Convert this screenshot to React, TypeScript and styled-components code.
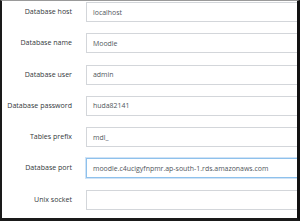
import React from 'react'
import styled, { createGlobalStyle } from 'styled-components'

const Global = createGlobalStyle`
  html, body {
    margin: 0;
    padding: 0;
    background: #ffffff;
  }
  * {
    box-sizing: border-box;
  }
`

const fields = [
    { label: 'Database host', value: 'localhost' },
    { label: 'Database name', value: 'Moodle' },
    { label: 'Database user', value: 'admin' },
    { label: 'Database password', value: 'huda82141' },
    { label: 'Tables prefix', value: 'mdl_' },
    { label: 'Database port', value: 'moodle.c4ucigyfnpmr.ap-south-1.rds.amazonaws.com', focused: true },
    { label: 'Unix socket', value: '' },
]

export default function App() {
    return (
        <>
            <Global />
            <Frame>
                <FormGrid>
                    {fields.map((f) => (
                        <React.Fragment key={f.label}>
                            <Label>{f.label}</Label>
                            <Input $focused={!!f.focused}>{f.value}</Input>
                        </React.Fragment>
                    ))}
                </FormGrid>
            </Frame>
        </>
    )
}

const Frame = styled.div`
width: 300px;
height: 221px;
background: #fff;
border-top: 1px solid #9a9a9a;
border-left: 2px solid #1a1a1a;
border-right: 3px solid #111;
border-bottom: 3px solid #1a1a1a;
overflow: hidden;
padding-top: 1px;
font-family: "Open Sans", "Noto Sans", sans-serif;
`

const FormGrid = styled.div`
display: grid;
grid-template-columns: 70px 260px;
grid-auto-rows: 20px;
column-gap: 14px;
row-gap: 11.3px;
`

const Label = styled.div`
display: flex;
align-items: center;
justify-content: flex-end;
padding-bottom: 2px;
font-size: 7.05px;
color: #33373b;
white-space: nowrap;
`

const Input = styled.div<{ $focused: boolean }>`
display: flex;
align-items: center;
height: 20px;
padding: 0 6px;
font-size: 6.95px;
color: #50565c;
white-space: nowrap;
background: #fff;
border: 1px solid ${(p) => (p.$focused ? '#8ec1ec' : '#d3d6da')};
box-shadow: ${(p) => (p.$focused ? '0 0 0 1px rgba(120, 175, 230, 0.35)' : 'none')};
`
